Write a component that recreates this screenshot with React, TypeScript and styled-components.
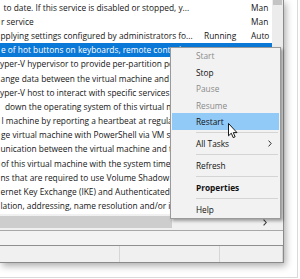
import React from "react";
import styled, { createGlobalStyle } from "styled-components";

const GlobalStyle = createGlobalStyle`
  html, body { margin: 0; padding: 0; background: #ffffff; }
  body {
    width: 300px; height: 279px; overflow: hidden;
    font-family: "Segoe UI", "Open Sans", "Noto Sans", sans-serif;
  }
`;

const Frame = styled.div`
  position: relative;
  width: 298px;
  height: 278px;
  box-sizing: border-box;
  border-right: 1px solid #dadada;
  border-bottom: 1px solid #dadada;
  overflow: hidden;
`;

const Window = styled.div`
  width: 284px;
  height: 263px;
  box-sizing: border-box;
  border-right: 1px solid #8a8a8a;
  border-bottom: 1px solid #8a8a8a;
  background: #f0f0f0;
  box-shadow: 2px 3px 7px rgba(0, 0, 0, 0.32);
  display: flex;
  flex-direction: column;
`;

const Main = styled.div`
  display: flex;
  height: 214px;
`;

const List = styled.div`
  width: 272px;
  background: #ffffff;
  display: flex;
  flex-direction: column;
  overflow: hidden;
`;

const Row = styled.div<{ $selected?: boolean }>`
  height: 14.2px;
  flex: none;
  display: flex;
  align-items: center;
  font-size: 8.35px;
  white-space: nowrap;
  background: ${(p) => (p.$selected ? "#0a78d7" : "transparent")};
  color: ${(p) => (p.$selected ? "#ffffff" : "#151515")};
`;

const Desc = styled.div`
  width: 200px;
  flex: none;
  overflow: hidden;
`;

const DescText = styled.span<{ $offset: number }>`
  display: inline-block;
  margin-left: ${(p) => p.$offset}px;
`;

const Status = styled.div`
  width: 47px;
  flex: none;
  padding-left: 4px;
  box-sizing: border-box;
`;

const Startup = styled.div`
  flex: 1;
  padding-left: 4px;
  overflow: hidden;
`;

const VScroll = styled.div`
  flex: 1;
  background: #ececec;
  display: flex;
  flex-direction: column;
  align-items: center;
`;

const VThumb = styled.div`
  width: 9px;
  height: 5px;
  background: #c4c4c4;
`;

const HScroll = styled.div`
  height: 16px;
  display: flex;
  background: #f0f0f0;
`;

const HTrack = styled.div`
  flex: 1;
  display: flex;
  align-items: center;
`;

const HThumb = styled.div`
  width: 172px;
  height: 12px;
  background: #cdcdcd;
`;

const HArrow = styled.div`
  width: 14px;
  display: flex;
  align-items: center;
  justify-content: center;
`;

const Corner = styled.div`
  width: 11px;
  background: #f0f0f0;
`;

const TabArea = styled.div`
  height: 14px;
  border-top: 1px solid #a8a8a8;
  background: #f3f3f3;
`;

const StatusBar = styled.div`
  height: 16px;
  border-top: 1px solid #8f8f8f;
  background: #f0f0f0;
  display: flex;
`;

const Panel = styled.div<{ $w?: number }>`
  width: ${(p) => (p.$w ? `${p.$w}px` : "auto")};
  flex: ${(p) => (p.$w ? "none" : "1")};
  border-right: 1px solid #d6d6d6;
`;

const Menu = styled.div`
  position: absolute;
  left: 170px;
  top: 46.8px;
  width: 111px;
  box-sizing: border-box;
  border: 1px solid #9a9a9a;
  background: #f2f2f2;
  box-shadow: 2px 2px 3px rgba(0, 0, 0, 0.35);
  padding: 0 1px;
  display: flex;
  flex-direction: column;
  font-size: 8.3px;
`;

const Item = styled.div<{ $disabled?: boolean; $hover?: boolean; $bold?: boolean }>`
  height: 16.4px;
  display: flex;
  align-items: center;
  justify-content: space-between;
  padding-left: 24px;
  padding-right: 7px;
  color: ${(p) => (p.$disabled ? "#8a8a8a" : "#111111")};
  background: ${(p) => (p.$hover ? "#91c9f7" : "transparent")};
  font-weight: ${(p) => (p.$bold ? 700 : 400)};
`;

const Separator = styled.div`
  height: 5.6px;
  display: flex;
  align-items: center;
  padding-left: 24px;
  padding-right: 1px;
  &::after {
    content: "";
    flex: 1;
    height: 1px;
    background: #d4d4d4;
  }
`;

const Cursor = styled.svg`
  position: absolute;
  left: 227.8px;
  top: 122.5px;
`;

const rows: { text: string; offset: number; status?: string; startup?: string; selected?: boolean }[] = [
  { text: "to date. If this service is disabled or stopped, y...", offset: 3.5, startup: "Man" },
  { text: "r service", offset: 1, startup: "Man" },
  { text: "pplying settings configured by administrators fo...", offset: 0.5, status: "Running", startup: "Auto" },
  { text: "e of hot buttons on keyboards, remote control...", offset: 1, selected: true },
  { text: "yper-V hypervisor to provide per-partition perfo...", offset: 0 },
  { text: "ange data between the virtual machine and the...", offset: 0.5 },
  { text: "yper-V host to interact with specific services ru...", offset: 0 },
  { text: "down the operating system of this virtual mach...", offset: 5 },
  { text: "l machine by reporting a heartbeat at regular int...", offset: 1.5 },
  { text: "ge virtual machine with PowerShell via VM sess...", offset: 1 },
  { text: "unication between the virtual machine and the...", offset: 0.5 },
  { text: "of this virtual machine with the system time of t...", offset: 1 },
  { text: "ns that are required to use Volume Shadow Cop...", offset: 0.5 },
  { text: "ernet Key Exchange (IKE) and Authenticated IP...", offset: 0.5 },
  { text: "lation, addressing, name resolution and/or intru...", offset: 0.5 },
];

export default function App() {
  return (
    <>
      <GlobalStyle />
      <Frame>
        <Window>
          <Main>
            <List>
              {rows.map((r, i) => (
                <Row key={i} $selected={r.selected}>
                  <Desc>
                    <DescText $offset={r.offset}>{r.text}</DescText>
                  </Desc>
                  <Status>{r.status ?? ""}</Status>
                  <Startup>{r.startup ?? ""}</Startup>
                </Row>
              ))}
            </List>
            <VScroll>
              <VThumb />
            </VScroll>
          </Main>
          <HScroll>
            <HTrack>
              <HThumb />
            </HTrack>
            <HArrow>
              <svg width="4" height="7" viewBox="0 0 4 7">
                <path d="M0.6 0.6 L3.2 3.5 L0.6 6.4" fill="none" stroke="#3a3a3a" strokeWidth="1.1" />
              </svg>
            </HArrow>
            <Corner />
          </HScroll>
          <TabArea />
          <StatusBar>
            <Panel $w={119} />
            <Panel $w={99} />
            <Panel />
          </StatusBar>
        </Window>
        <Menu>
          <Item $disabled>Start</Item>
          <Item>Stop</Item>
          <Item $disabled>Pause</Item>
          <Item $disabled>Resume</Item>
          <Item $hover>Restart</Item>
          <Separator />
          <Item>
            <span>All Tasks</span>
            <svg width="4" height="7" viewBox="0 0 4 7">
              <path d="M0.6 0.6 L3.2 3.5 L0.6 6.4" fill="none" stroke="#333" strokeWidth="1" />
            </svg>
          </Item>
          <Separator />
          <Item>Refresh</Item>
          <Separator />
          <Item $bold>Properties</Item>
          <Separator />
          <Item>Help</Item>
        </Menu>
        <Cursor width="11" height="16" viewBox="0 0 11 16">
          <path
            d="M0.5 0.5 L0.5 12.8 L3.3 10.2 L5.2 14.6 L7.1 13.8 L5.3 9.6 L9 9.6 Z"
            fill="#ffffff"
            stroke="#000000"
            strokeWidth="0.9"
            strokeLinejoin="round"
          />
        </Cursor>
      </Frame>
    </>
  );
}
